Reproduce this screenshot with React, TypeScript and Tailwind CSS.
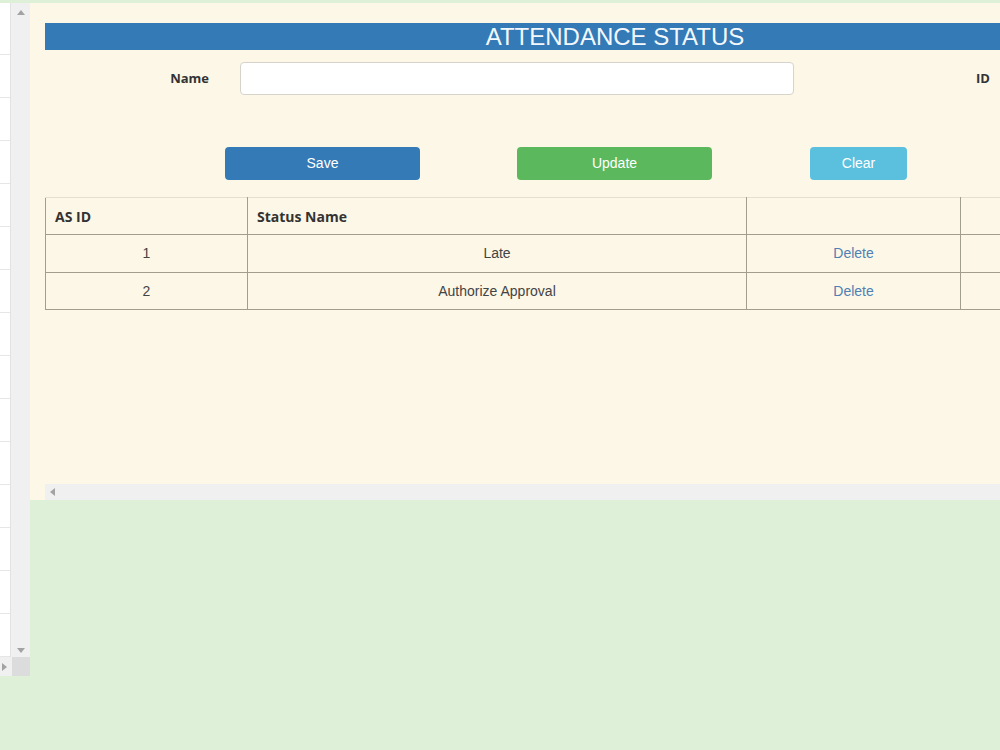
import React from "react";

const rows = [
  { id: 1, name: "Late", h: "h-[38px]" },
  { id: 2, name: "Authorize Approval", h: "h-[37px]" },
];

const lineTops = Array.from({ length: 14 }, (_, i) => i);

const ArrowUp = () => (
  <svg width="8" height="5" viewBox="0 0 8 5">
    <path d="M0 5 L4 0 L8 5 Z" fill="#a3a3a3" />
  </svg>
);
const ArrowDown = () => (
  <svg width="8" height="5" viewBox="0 0 8 5">
    <path d="M0 0 L4 5 L8 0 Z" fill="#a3a3a3" />
  </svg>
);
const ArrowLeft = () => (
  <svg width="5" height="8" viewBox="0 0 5 8">
    <path d="M5 0 L0 4 L5 8 Z" fill="#a3a3a3" />
  </svg>
);
const ArrowRight = () => (
  <svg width="5" height="8" viewBox="0 0 5 8">
    <path d="M0 0 L5 4 L0 8 Z" fill="#a3a3a3" />
  </svg>
);

function SideStrip() {
  return (
    <div className="flex w-[30px] shrink-0 flex-col h-[673px]">
      <div className="flex flex-1">
        {/* clipped neighbour grid */}
        <div className="w-[11px] bg-white border-r border-[#e2e2e2] flex flex-col">
          <div className="h-[52px] border-b border-[#e6e6e6]" />
          {lineTops.map((i) => (
            <div key={i} className="h-[43px] border-b border-[#e6e6e6]" />
          ))}
        </div>
        <div className="w-[19px] bg-[#f0f0f0] flex flex-col items-center justify-between pt-[7px] pb-[4px]">
          <ArrowUp />
          <ArrowDown />
        </div>
      </div>
      <div className="flex h-[20px]">
        <div className="w-[12px] bg-[#f0f0f0] flex items-center pl-[2px]">
          <ArrowRight />
        </div>
        <div className="w-[18px] bg-[#dcdcdc]" />
      </div>
    </div>
  );
}

function Button({ label, className }: { label: string; className: string }) {
  return (
    <button
      className={
        "h-[33px] rounded-[4px] text-white text-[14px] font-['Liberation_Sans',Arial,sans-serif] " +
        className
      }
    >
      {label}
    </button>
  );
}

export default function App() {
  const border = "border border-[#a29e8e] text-[14px]";
  const head = border + " border-t-[#e4dfcf] text-[13px] text-[#333] text-left pl-[9px] font-bold font-['Open_Sans',sans-serif]";
  return (
    <div className="w-[1000px] h-[750px] bg-[#dff0d8] pt-[3px] overflow-hidden font-['Liberation_Sans',Arial,sans-serif]">
      <div className="flex items-start">
        <SideStrip />
        <div className="flex-1 min-w-0 h-[497px] bg-[#fdf7e7] pl-[15px] pt-[20px] flex flex-col">
          <div className="flex-1 min-h-0 overflow-hidden">
            <div className="w-[1140px]">
              <div className="h-[27px] bg-[#337ab7] text-[#f4f8fc] text-[24px] leading-[27px] text-center">
                ATTENDANCE STATUS
              </div>

              <div className="flex items-center mt-[12px]">
                <label className="w-[164px] text-right text-[13px] font-bold text-[#333] font-['Open_Sans',sans-serif]">
                  Name
                </label>
                <input
                  type="text"
                  className="ml-[31px] w-[554px] h-[33px] bg-white border border-[#d6d3ca] rounded-[4px]"
                />
                <label className="ml-[182px] text-[13px] font-bold text-[#333] font-['Open_Sans',sans-serif]">
                  ID
                </label>
              </div>

              <div className="flex mt-[52px] pl-[180px] gap-[97px]">
                <Button label="Save" className="w-[195px] bg-[#337ab7]" />
                <Button label="Update" className="w-[195px] bg-[#5cb85c]" />
                <Button label="Clear" className="ml-[1px] w-[97px] bg-[#5bc0de]" />
              </div>

              <table className="mt-[17px] border-collapse table-fixed w-[1140px]">
                <colgroup>
                  <col className="w-[202px]" />
                  <col className="w-[499px]" />
                  <col className="w-[214px]" />
                  <col />
                </colgroup>
                <thead>
                  <tr className="h-[37px]">
                    <th className={head}>AS ID</th>
                    <th className={head}>Status Name</th>
                    <th className={head} />
                    <th className={head} />
                  </tr>
                </thead>
                <tbody>
                  {rows.map((r) => (
                    <tr key={r.id} className={r.h}>
                      <td className={border + " text-center text-[#444]"}>{r.id}</td>
                      <td className={border + " text-center text-[#444]"}>{r.name}</td>
                      <td className={border + " text-center text-[#4f80b5]"}>Delete</td>
                      <td className={border} />
                    </tr>
                  ))}
                </tbody>
              </table>
            </div>
          </div>
          <div className="h-[16px] bg-[#f0f0f0] flex items-center pl-[5px]">
            <ArrowLeft />
          </div>
        </div>
      </div>
    </div>
  );
}
